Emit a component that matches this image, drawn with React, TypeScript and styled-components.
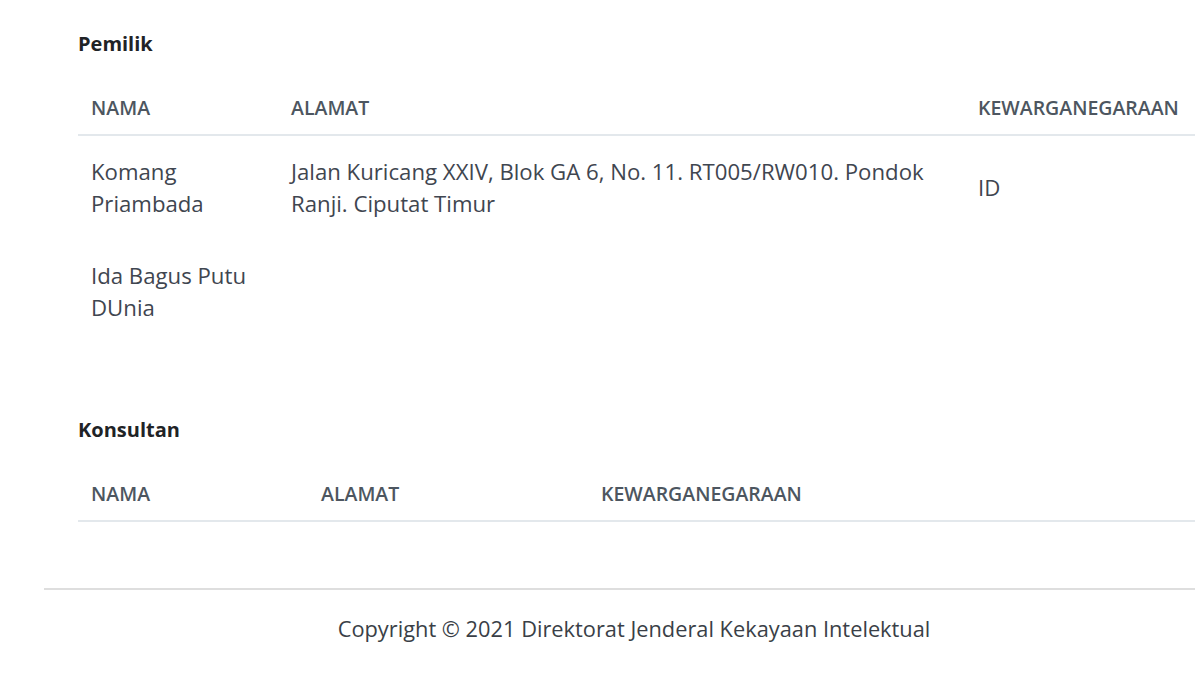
import React from "react";
import styled, { createGlobalStyle } from "styled-components";

const GlobalStyle = createGlobalStyle`
  html, body { margin: 0; padding: 0; background: #fff; overflow: hidden; }
  body { font-family: "Open Sans", "Noto Sans", sans-serif; }
`;

const Page = styled.div`
  width: 1180px;
  padding-left: 44px;
  box-sizing: content-box;
`;

const Content = styled.main`
  padding: 26px 0 0 34px;
  display: flex;
  flex-direction: column;
`;

const Section = styled.section<{ $gap?: number }>`
  margin-bottom: ${(p) => p.$gap ?? 0}px;
`;

const Title = styled.h2`
  margin: 0 0 33px;
  font-size: 20px;
  line-height: 36px;
  font-weight: 700;
  color: #1f2326;
`;

const Table = styled.table`
  width: 1146px;
  border-collapse: collapse;
  table-layout: fixed;
`;

const Th = styled.th<{ $w?: number }>`
  width: ${(p) => (p.$w ? `${p.$w}px` : "auto")};
  text-align: left;
  padding: 0 13px 13px;
  font-size: 19.5px;
  line-height: 26px;
  font-weight: 600;
  color: #4d5660;
  border-bottom: 2px solid #e3e8ec;
  white-space: nowrap;
`;

const Td = styled.td`
  padding: 20px 13px;
  font-size: 22.2px;
  line-height: 32px;
  color: #3f4650;
  vertical-align: middle;
`;

const Footer = styled.footer`
  margin-top: 66px;
  border-top: 2px solid #dedede;
  padding-top: 24px;
  text-align: center;
  font-size: 21.8px;
  line-height: 30px;
  color: #3a3f47;
`;

const owners = [
  {
    nama: "Komang Priambada",
    alamat: "Jalan Kuricang XXIV, Blok GA 6, No. 11. RT005/RW010. Pondok Ranji. Ciputat Timur",
    kw: "ID",
  },
  { nama: "Ida Bagus Putu DUnia", alamat: "", kw: "" },
];

export default function App() {
  return (
    <>
      <GlobalStyle />
      <Page>
        <Content>
          <Section $gap={68}>
            <Title>Pemilik</Title>
            <Table>
              <thead>
                <tr>
                  <Th $w={174}>NAMA</Th>
                  <Th $w={661}>ALAMAT</Th>
                  <Th>KEWARGANEGARAAN</Th>
                </tr>
              </thead>
              <tbody>
                {owners.map((o) => (
                  <tr key={o.nama}>
                    <Td>{o.nama}</Td>
                    <Td>{o.alamat}</Td>
                    <Td>{o.kw}</Td>
                  </tr>
                ))}
              </tbody>
            </Table>
          </Section>
          <Section>
            <Title>Konsultan</Title>
            <Table>
              <thead>
                <tr>
                  <Th $w={204}>NAMA</Th>
                  <Th $w={254}>ALAMAT</Th>
                  <Th>KEWARGANEGARAAN</Th>
                </tr>
              </thead>
              <tbody />
            </Table>
          </Section>
        </Content>
        <Footer>Copyright © 2021 Direktorat Jenderal Kekayaan Intelektual</Footer>
      </Page>
    </>
  );
}
